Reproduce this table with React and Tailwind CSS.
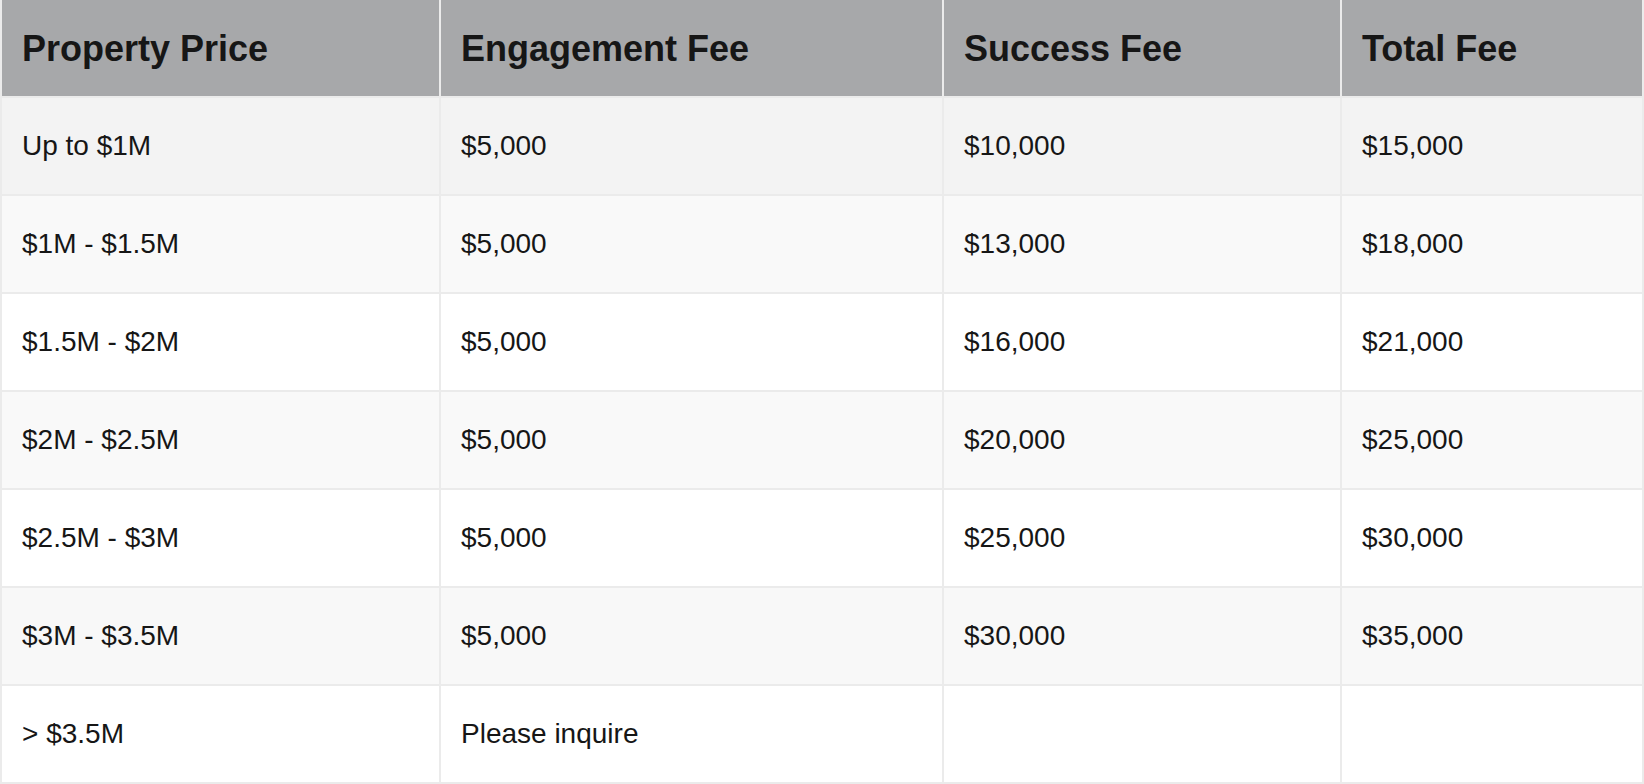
const rows = [
  ["Up to $1M", "$5,000", "$10,000", "$15,000"],
  ["$1M - $1.5M", "$5,000", "$13,000", "$18,000"],
  ["$1.5M - $2M", "$5,000", "$16,000", "$21,000"],
  ["$2M - $2.5M", "$5,000", "$20,000", "$25,000"],
  ["$2.5M - $3M", "$5,000", "$25,000", "$30,000"],
  ["$3M - $3.5M", "$5,000", "$30,000", "$35,000"],
  ["> $3.5M", "Please inquire", "", ""],
];

const rowBg = ["bg-[#f3f3f3]", "bg-[#f9f9f9]", "bg-white", "bg-[#f9f9f9]", "bg-white", "bg-[#f8f8f8]", "bg-white"];

export default function App() {
  return (
    <div className="min-h-screen bg-white font-['Liberation_Sans',Arial,sans-serif] text-[#161616]">
      <table className="w-[1642px] table-fixed border-collapse">
        <colgroup>
          <col className="w-[439px]" />
          <col className="w-[503px]" />
          <col className="w-[398px]" />
          <col className="w-[302px]" />
        </colgroup>
        <thead>
          <tr className="bg-[#a7a8aa]">
            {["Property Price", "Engagement Fee", "Success Fee", "Total Fee"].map((h) => (
              <th
                key={h}
                className="h-[97px] border-2 border-t-0 border-[#ebebeb] px-5 pt-0.5 text-left align-middle text-[36px] font-bold leading-none"
              >
                {h}
              </th>
            ))}
          </tr>
        </thead>
        <tbody>
          {rows.map((r, i) => (
            <tr key={i} className={rowBg[i]}>
              {r.map((c, j) => (
                <td
                  key={j}
                  className="h-[98px] border-2 border-[#ebebeb] px-5 align-middle text-[28px] leading-none"
                >
                  {c}
                </td>
              ))}
            </tr>
          ))}
        </tbody>
      </table>
    </div>
  );
}
